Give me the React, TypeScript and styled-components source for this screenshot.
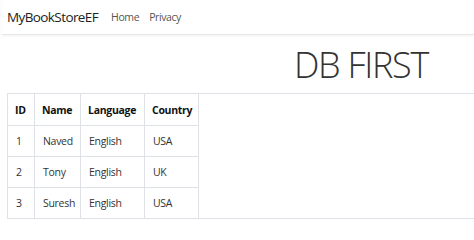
import styled, { createGlobalStyle } from "styled-components";

const GlobalStyle = createGlobalStyle`
  body {
    margin: 0;
    background: #fff;
    font-family: "Open Sans", "Noto Sans", sans-serif;
    color: #212529;
  }
`;

const books = [
  { id: 1, name: "Naved", language: "English", country: "USA" },
  { id: 2, name: "Tony", language: "English", country: "UK" },
  { id: 3, name: "Suresh", language: "English", country: "USA" },
];

const columns = [
  { key: "ID", width: 27 },
  { key: "Name", width: 46 },
  { key: "Language", width: 64 },
  { key: "Country", width: 54 },
];

const App = () => {
  return (
    <>
      <GlobalStyle />
      <Navbar>
        <Brand>MyBookStoreEF</Brand>
        <NavLinks>
          <NavItem>Home</NavItem>
          <NavItem>Privacy</NavItem>
        </NavLinks>
      </Navbar>
      <Heading>DB FIRST</Heading>
      <TableWrap>
        <Table>
          <colgroup>
            {columns.map((c) => (
              <col key={c.key} style={{ width: c.width }} />
            ))}
          </colgroup>
          <thead>
            <tr>
              {columns.map((c) => (
                <HeadCell key={c.key}>{c.key}</HeadCell>
              ))}
            </tr>
          </thead>
          <tbody>
            {books.map((b) => (
              <tr key={b.id}>
                <Cell>{b.id}</Cell>
                <Cell>{b.name}</Cell>
                <Cell>{b.language}</Cell>
                <Cell>{b.country}</Cell>
              </tr>
            ))}
          </tbody>
        </Table>
      </TableWrap>
    </>
  );
};
export default App;

const Navbar = styled.nav`
  height: 34px;
  margin-left: 2px;
  display: flex;
  align-items: center;
  padding-left: 5px;
  border-bottom: 1px solid #e6e6e6;
  box-shadow: 0 1px 3px rgba(0, 0, 0, 0.06);
`;

const Brand = styled.span`
  font-size: 13.5px;
  color: #222;
  letter-spacing: -0.6px;
  margin-right: 13px;
`;

const NavLinks = styled.div`
  display: flex;
  gap: 10px;
`;

const NavItem = styled.span`
  font-size: 10.5px;
  letter-spacing: -0.4px;
  color: #555;
`;

const Heading = styled.h1`
  margin: 0;
  height: 58px;
  padding-left: 294px;
  display: flex;
  align-items: center;
  font-size: 36px;
  font-weight: 300;
  color: #333;
  letter-spacing: -1.3px;
`;

const TableWrap = styled.div`
  margin-left: 7px;
  border-top: 1px solid #dee2e6;
  border-bottom: 1px solid #dee2e6;
`;

const Table = styled.table`
  width: 191px;
  border-collapse: collapse;
  table-layout: fixed;
  font-size: 10.5px;
  letter-spacing: -0.3px;
`;

const HeadCell = styled.th`
  height: 31px;
  padding: 0 7px;
  text-align: left;
  font-weight: 700;
  color: #111;
  border: 1px solid #dee2e6;
  border-top: none;
  white-space: nowrap;
`;

const Cell = styled.td`
  height: 30px;
  padding: 0 8px;
  border: 1px solid #dee2e6;
  color: #333;
  white-space: nowrap;
  tr:last-child > & {
    border-bottom: none;
  }
`;
